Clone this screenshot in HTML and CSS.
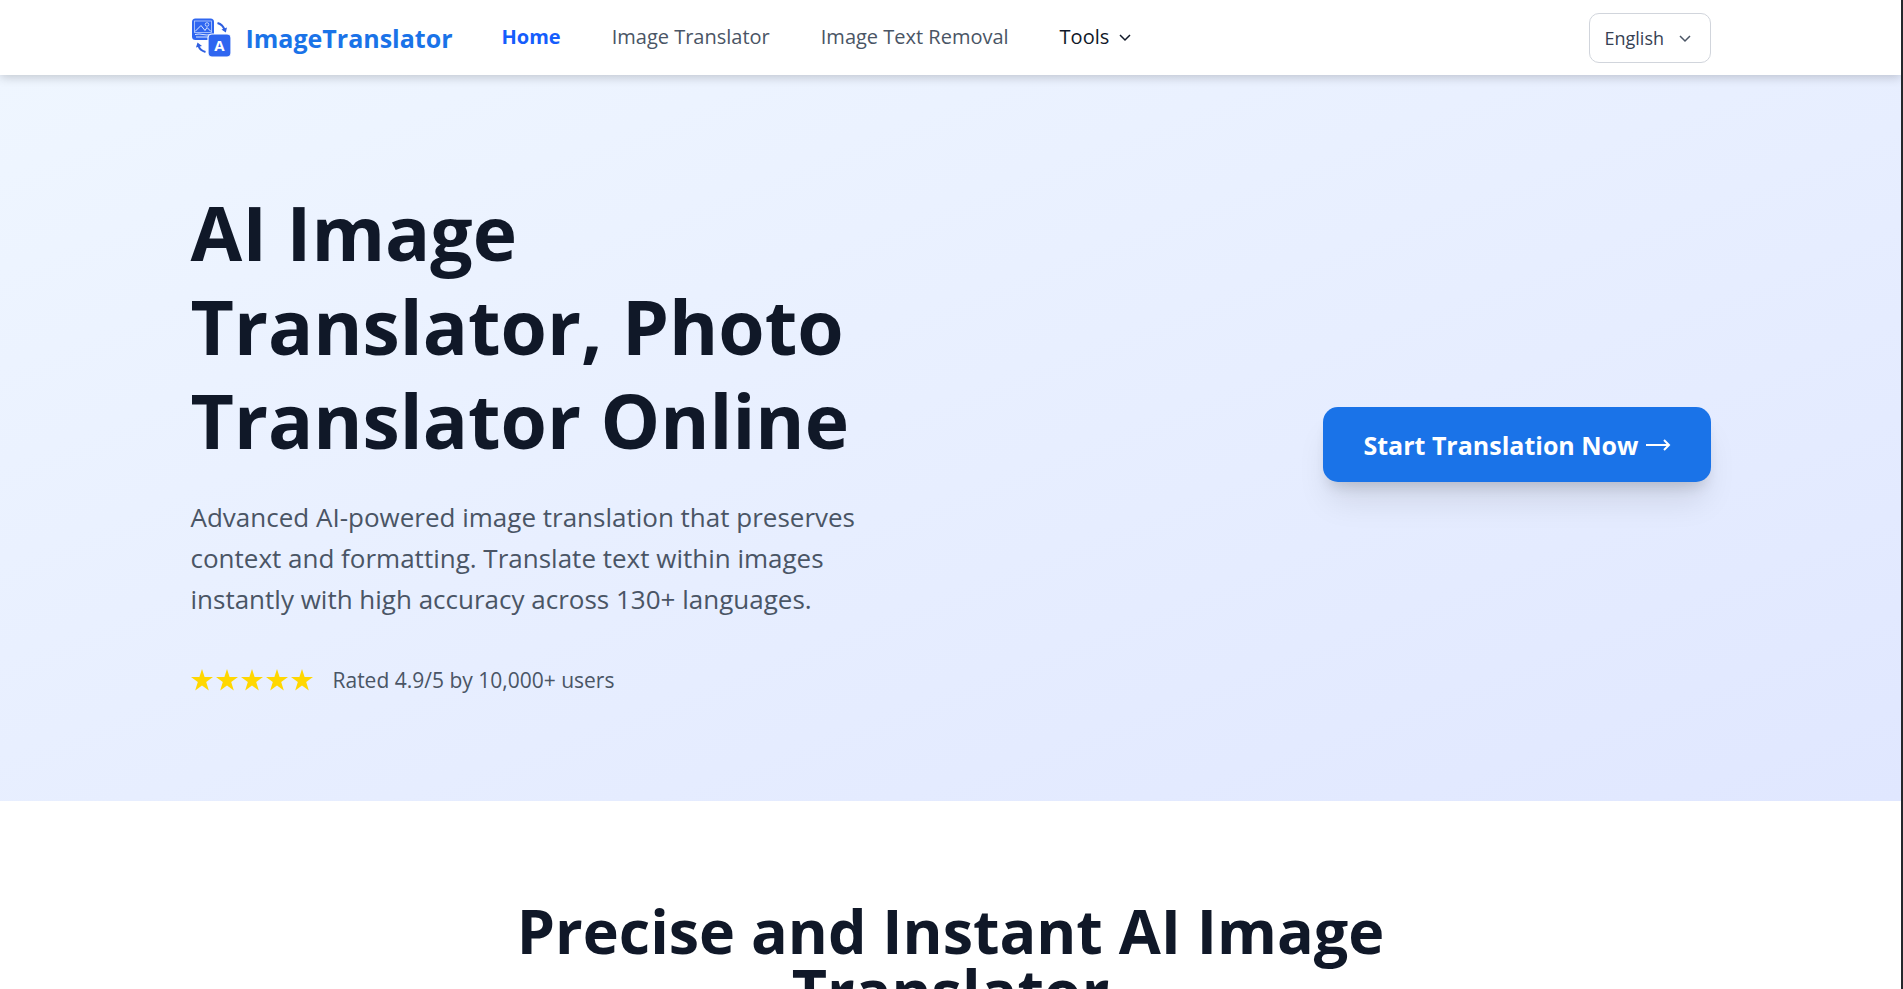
FILE: index.html
```
<!DOCTYPE html>
<html lang="en">
<head>
    <meta charset="UTF-8">
    <meta name="viewport" content="width=device-width, initial-scale=1.0">
    <title>ImageTranslator</title>
    <link rel="stylesheet" href="styles.css">
</head>
<body>
    <!-- Header -->
    <header class="header">
        <div class="container nav">
            <a class="logo" href="#">
                <svg class="logo-icon" viewBox="0 0 40 40" aria-hidden="true">
                    <rect x="1" y="0.500" width="22" height="21.500" rx="3.5" fill="#2f66f0"/>
                    <rect x="3.5" y="3" width="17" height="11.500" fill="none" stroke="#bcd0ff" stroke-width="0.8"/>
                    <path d="M4 13.5l6-6 4 5 2-3 4 4" fill="none" stroke="#dce7ff" stroke-width="1"/>
                    <circle cx="16" cy="6.500" r="1.800" fill="none" stroke="#dce7ff" stroke-width="0.8"/>
                    <path d="M4 16.500q4-1 8 0t8 0M5 19h14" fill="none" stroke="#dce7ff" stroke-width="1"/>
                    <rect x="17" y="16" width="23" height="23" rx="4" fill="#2f66f0" stroke="#fff" stroke-width="1.200"/>
                    <text class="logo-letter" x="28.500" y="33" text-anchor="middle">A</text>
                    <path d="M26.500 5q5.500 1.500 7 7" fill="none" stroke="#2f5fe0" stroke-width="2"/>
                    <path d="M30.500 11.500l5.500-2-1.200 5z" fill="#2f5fe0"/>
                    <path d="M14.500 34q-5.500-1.500-7-6" fill="none" stroke="#2f5fe0" stroke-width="2"/>
                    <path d="M5 29.500l1.500-5 4.500 3.500z" fill="#2f5fe0"/>
                </svg>
                <span>ImageTranslator</span>
            </a>
            <nav class="menu">
                <a class="active" href="#">Home</a>
                <a href="#">Image Translator</a>
                <a href="#">Image Text Removal</a>
                <button class="tools" type="button">Tools
                    <svg class="chevron" viewBox="0 0 16 16" aria-hidden="true"><path d="M3 6l5 5 5-5"/></svg>
                </button>
            </nav>
            <div class="language">
                <select aria-label="Language">
                    <option>English</option>
                </select>
                <svg class="chevron" viewBox="0 0 16 16" aria-hidden="true"><path d="M3 6l5 5 5-5"/></svg>
            </div>
        </div>
    </header>

    <!-- Hero -->
    <section class="hero">
        <div class="container hero-row">
            <div class="hero-text">
                <h1>AI Image Translator, Photo Translator Online</h1>
                <p class="intro">Advanced AI-powered image translation that preserves context and formatting. Translate text within images instantly with high accuracy across 130+ languages.</p>
                <div class="rating">
                    <div class="stars" role="img" aria-label="5 stars">
                        <svg viewBox="0 0 22 22"><path d="M11 0l2.600 8H22l-6.800 5 2.600 8.500L11 16.500l-6.800 5L6.800 13 0 8h8.400z"/></svg>
                        <svg viewBox="0 0 22 22"><path d="M11 0l2.600 8H22l-6.800 5 2.600 8.500L11 16.500l-6.800 5L6.800 13 0 8h8.400z"/></svg>
                        <svg viewBox="0 0 22 22"><path d="M11 0l2.600 8H22l-6.800 5 2.600 8.500L11 16.500l-6.800 5L6.800 13 0 8h8.400z"/></svg>
                        <svg viewBox="0 0 22 22"><path d="M11 0l2.600 8H22l-6.800 5 2.600 8.500L11 16.500l-6.800 5L6.800 13 0 8h8.400z"/></svg>
                        <svg viewBox="0 0 22 22"><path d="M11 0l2.600 8H22l-6.800 5 2.600 8.500L11 16.500l-6.800 5L6.800 13 0 8h8.400z"/></svg>
                    </div>
                    <span>Rated 4.9/5 by 10,000+ users</span>
                </div>
            </div>
            <a class="start" href="#">Start Translation Now
                <svg class="arrow" viewBox="0 0 26 20" aria-hidden="true"><path d="M1 10h23M19 5l5 5-5 5"/></svg>
            </a>
        </div>
    </section>

    <!-- Features -->
    <section class="features">
        <h2>Precise and Instant AI Image Translator</h2>
    </section>
</body>
</html>
```
FILE: styles.css
```
* { box-sizing: border-box; }
html { height: 100%; overflow: hidden; }
body { margin: 0; height: 100%; overflow: hidden; border-right: 2px solid #25282c; background: white; color: #101828; font-family: "Open Sans", "Noto Sans", sans-serif; }
a { text-decoration: none; }
h1, h2, p { margin: 0; }
.container { max-width: 1600px; margin: 0 auto; padding: 0 40px; }

.header { position: relative; background: white; box-shadow: 0 2px 10px rgba(0, 0, 0, 0.2); }
.nav { display: flex; align-items: center; height: 75px; }
.logo { display: flex; align-items: center; gap: 15px; color: #1a73e8; font-size: 25px; font-weight: 700; }
.logo-icon { width: 40px; height: 40px; }
.logo-letter { fill: white; font-size: 15px; font-weight: 700; }
.menu { display: flex; align-items: center; gap: 51px; margin-left: 49px; padding-bottom: 2px; }
.menu a, .tools { color: #4a5565; font-size: 20px; }
.menu .active { color: #155dfc; font-weight: 700; }
.tools { display: flex; align-items: center; gap: 8px; padding: 0; border: 0; background: none; font-family: inherit; cursor: pointer; }
.menu .tools { color: #101828; }
.chevron { width: 16px; height: 16px; fill: none; stroke: currentColor; stroke-width: 1.5; }
.language { display: flex; align-items: center; position: relative; margin-left: auto; color: #4a5565; }
.language select { appearance: none; height: 50px; width: 122px; padding: 0 15px; border: 1px solid #d1d5dc; border-radius: 10px; background: white; color: #364153; font-family: inherit; font-size: 18px; }
.language .chevron { position: absolute; right: 18px; pointer-events: none; }

.hero { padding: 110px 0 97px; background: linear-gradient(to bottom right, #eff6ff, #e0e7ff); }
.hero-row { display: flex; align-items: center; justify-content: space-between; }
.hero-text { max-width: 680px; }
h1 { font-size: 75px; font-weight: 700; line-height: 94px; }
.intro { margin-top: 30px; color: #4a5565; font-size: 26px; line-height: 41px; }
.rating { display: flex; align-items: center; gap: 20px; margin-top: 36px; color: #4a5565; font-size: 21px; line-height: 48px; }
.stars { display: flex; gap: 3px; }
.stars svg { width: 22px; height: 22px; fill: #ffd700; }
.start { display: flex; align-items: center; gap: 6px; height: 75px; padding: 0 40px; border-radius: 15px; background: #1a73e8; color: white; font-size: 25px; font-weight: 700; box-shadow: 0 24px 32px -6px rgba(0, 0, 0, 0.1), 0 10px 14px -6px rgba(0, 0, 0, 0.14); }
.arrow { width: 26px; height: 20px; fill: none; stroke: currentColor; stroke-width: 2; }

.features { padding: 100px 40px; text-align: center; }
h2 { max-width: 960px; margin: 0 auto; font-size: 61px; font-weight: 700; line-height: 60px; }
```
